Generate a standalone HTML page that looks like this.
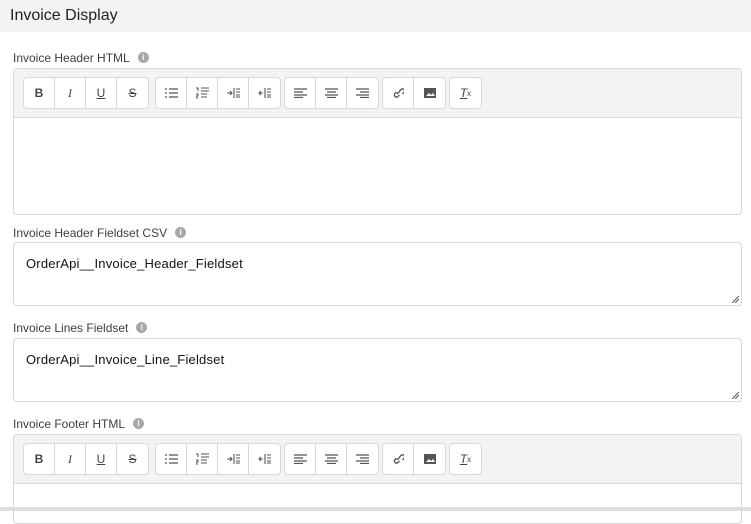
<!DOCTYPE html>
<html><head><meta charset="utf-8"><style>
*{box-sizing:border-box;margin:0;padding:0}
body{width:751px;height:511px;background:#fff;font-family:"Liberation Sans",sans-serif;color:#3e3e3c;position:relative;overflow:hidden}
.hdr{position:absolute;left:0;top:0;width:751px;height:32px;background:#f3f3f3;font-size:16px;line-height:32px;padding-left:10px;color:#222}
.lbl{position:absolute;left:13px;font-size:12px;color:#3e3e3c}
.info{display:inline-block;width:11px;height:11px;border-radius:50%;background:#a8a8a8;color:#fff;font-size:8px;font-weight:bold;text-align:center;line-height:11px;vertical-align:middle;margin-left:8px;position:relative;top:-1px}
.box{position:absolute;left:13px;width:729px;border:1px solid #d8d8d8;border-radius:4px;background:#fff}
.tb{position:absolute;left:0;top:0;width:100%;height:49px;background:#f3f3f3;border-bottom:1px solid #d8d8d8;border-radius:4px 4px 0 0}
.grp{position:absolute;top:8px;height:32px;border:1px solid #d8d8d8;border-radius:4px;background:#fff;display:flex}
.btn{width:31px;height:30px;border-right:1px solid #d8d8d8;display:flex;align-items:center;justify-content:center;font-size:12px;color:#444}
.btn:last-child{border-right:none}
.ta{font-size:13px;color:#111;padding:13px 0 0 12px;letter-spacing:0.2px}
.rs{position:absolute;right:2px;bottom:2px}
.bot{position:absolute;left:0;top:507px;width:751px;height:4px;background:#ddd;z-index:5}
svg path{stroke:#555;fill:none}
</style></head><body>
<div class="hdr">Invoice Display</div>

<div class="lbl" style="top:51px">Invoice Header HTML<span class="info">i</span></div>
<div class="box" style="top:68px;height:147px">
 <div class="tb" id="t1"></div>
</div>

<div class="lbl" style="top:226px">Invoice Header Fieldset CSV<span class="info">i</span></div>
<div class="box" style="top:242px;height:64px"><div class="ta">OrderApi__Invoice_Header_Fieldset</div><svg class="rs" width="7" height="7"><path d="M0 7L7 0M3 7L7 3" stroke="#888"/></svg></div>

<div class="lbl" style="top:321px">Invoice Lines Fieldset<span class="info">i</span></div>
<div class="box" style="top:338px;height:64px"><div class="ta">OrderApi__Invoice_Line_Fieldset</div><svg class="rs" width="7" height="7"><path d="M0 7L7 0M3 7L7 3" stroke="#888"/></svg></div>

<div class="lbl" style="top:417px">Invoice Footer HTML<span class="info">i</span></div>
<div class="box" style="top:434px;height:90px">
 <div class="tb" id="t2"></div>
</div>
<div class="bot"></div>
<template id="tpl">
  <div class="grp" style="left:9px"><div class="btn"><b>B</b></div><div class="btn"><i style="font-family:'Liberation Serif'">I</i></div><div class="btn"><u>U</u></div><div class="btn"><s>S</s></div></div>
  <div class="grp" style="left:141px">
   <div class="btn"><svg width="13" height="10"><path d="M0 1h2M0 5h2M0 9h2M4 1h9M4 5h9M4 9h9" stroke-width="1.2"/></svg></div>
   <div class="btn"><svg width="13" height="12"><path d="M0 1h2v3M0 7h2v2H0v2h2M5 1h8M5 4h8M5 7h6M5 10h6" stroke-width="1"/></svg></div>
   <div class="btn"><svg width="13" height="10"><path d="M0 5h4M3 3l2 2-2 2M7 0v10M9 1h4M9 4h4M9 7h4M9 9h4" stroke-width="1.1"/></svg></div>
   <div class="btn"><svg width="13" height="10"><path d="M1 5h4M3 3L1 5l2 2M7 0v10M9 1h4M9 4h4M9 7h4M9 9h4" stroke-width="1.1"/></svg></div>
  </div>
  <div class="grp" style="left:270px">
   <div class="btn"><svg width="13" height="10"><path d="M0 1h13M0 4h9M0 7h13M0 9.5h9" stroke-width="1.2"/></svg></div>
   <div class="btn"><svg width="13" height="10"><path d="M0 1h13M2 4h9M0 7h13M2 9.5h9" stroke-width="1.2"/></svg></div>
   <div class="btn"><svg width="13" height="10"><path d="M0 1h13M4 4h9M0 7h13M4 9.5h9" stroke-width="1.2"/></svg></div>
  </div>
  <div class="grp" style="left:368px"><div class="btn"><svg width="12" height="12" viewBox="0 0 12 12"><path d="M5 7l3-3M4.5 5L3 6.5a2 2 0 003 3L7.5 8M7.5 4L9 2.5a2 2 0 013 3L10.5 7" stroke-width="1.4"/></svg></div><div class="btn"><svg width="12" height="10"><rect width="12" height="10" fill="#555"/><path d="M2 8l3-3 2 2 2-2 2 3z" fill="#fff" stroke="none" style="fill:#fff;stroke:none"/></svg></div></div>
  <div class="grp" style="left:435px"><div class="btn"><u><i>T</i></u><sub style="font-size:8px">x</sub></div></div>
</template>
<script>
var t=document.getElementById('tpl').innerHTML;
document.getElementById('t1').innerHTML=t;document.getElementById('t2').innerHTML=t;
</script>
</body></html>
